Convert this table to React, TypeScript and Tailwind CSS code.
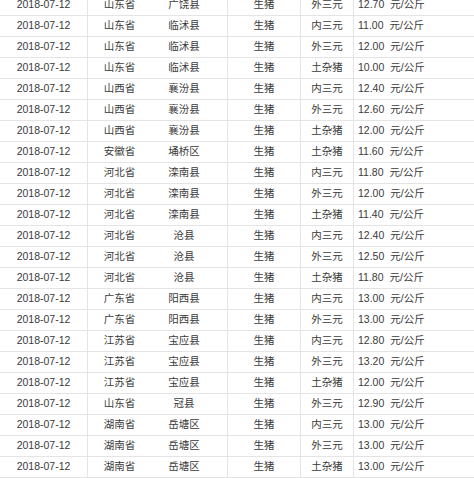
const rows: [string, string, string, string][] = [
  ["山东省", "广饶县", "外三元", "12.70"],
  ["山东省", "临沭县", "内三元", "11.00"],
  ["山东省", "临沭县", "外三元", "12.00"],
  ["山东省", "临沭县", "土杂猪", "10.00"],
  ["山西省", "襄汾县", "内三元", "12.40"],
  ["山西省", "襄汾县", "外三元", "12.60"],
  ["山西省", "襄汾县", "土杂猪", "12.00"],
  ["安徽省", "埇桥区", "土杂猪", "11.60"],
  ["河北省", "滦南县", "内三元", "11.80"],
  ["河北省", "滦南县", "外三元", "12.00"],
  ["河北省", "滦南县", "土杂猪", "11.40"],
  ["河北省", "沧县", "内三元", "12.40"],
  ["河北省", "沧县", "外三元", "12.50"],
  ["河北省", "沧县", "土杂猪", "11.80"],
  ["广东省", "阳西县", "内三元", "13.00"],
  ["广东省", "阳西县", "外三元", "13.00"],
  ["江苏省", "宝应县", "内三元", "12.80"],
  ["江苏省", "宝应县", "外三元", "13.20"],
  ["江苏省", "宝应县", "土杂猪", "12.00"],
  ["山东省", "冠县", "外三元", "12.90"],
  ["湖南省", "岳塘区", "内三元", "13.00"],
  ["湖南省", "岳塘区", "外三元", "13.00"],
  ["湖南省", "岳塘区", "土杂猪", "13.00"],
];

export default function App() {
  return (
    <div className="w-[474px] h-[478px] overflow-hidden bg-white">
      <div
        className="-mt-[5px] flex flex-col text-[10.5px] text-[#3a3a3a]"
        style={{ fontFamily: '"Liberation Sans", "Noto Sans CJK SC", sans-serif' }}
      >
        {rows.map((r, i) => (
          <div key={i} className="flex h-[21px] items-center border-b border-[#e4e4e4]">
            <div className="w-[88px] h-full flex items-center justify-center border-r border-[#e4e4e4]">
              2018-07-12
            </div>
            <div className="w-[63px] h-full flex items-center justify-center">{r[0]}</div>
            <div className="w-[77px] h-full flex items-center justify-center pr-[10px] border-r border-[#e4e4e4]">
              {r[1]}
            </div>
            <div className="w-[73px] h-full flex items-center justify-center border-r border-[#e4e4e4]">
              生猪
            </div>
            <div className="w-[53px] h-full flex items-center justify-center border-r border-[#e4e4e4]">
              {r[2]}
            </div>
            <div className="flex-1 h-full flex items-center pl-[4px] gap-[6px]">
              <span>{r[3]}</span>
              <span>元/公斤</span>
            </div>
          </div>
        ))}
      </div>
    </div>
  );
}
